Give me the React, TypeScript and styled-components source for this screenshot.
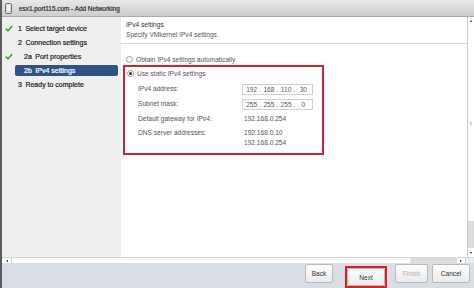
import React from "react";
import styled, { createGlobalStyle } from "styled-components";

const GlobalStyle = createGlobalStyle`
  html, body {
    margin: 0;
    padding: 0;
    background: #fff;
  }
  body {
    font-family: "Liberation Sans", Arial, sans-serif;
  }
`;

const Window = styled.div`
  width: 474px;
  height: 288px;
  box-sizing: border-box;
  border-left: 2px solid #5b5b5b;
  display: flex;
  flex-direction: column;
  overflow: hidden;
  background: #fff;
`;

const TitleBar = styled.div`
  height: 17px;
  flex: none;
  box-sizing: border-box;
  display: flex;
  align-items: center;
  padding-left: 3px;
  gap: 7px;
  background: linear-gradient(#e8e8e8, #cdcdcd);
  border-bottom: 1px solid #a9a9a9;
  font-size: 6.4px;
  color: #2e2e2e;
  -webkit-text-stroke: 0.2px #2e2e2e;
`;

const Middle = styled.div`
  height: 240px;
  flex: none;
  display: flex;
`;

const Nav = styled.nav`
  width: 119px;
  flex: none;
  background: #efefef;
  padding: 4px 0 0 3px;
  box-sizing: border-box;
`;

const NavItem = styled.div`
  height: 14px;
  display: flex;
  align-items: center;
`;

const CheckSlot = styled.span`
  width: 13px;
  flex: none;
  display: flex;
  align-items: center;
`;

const NavLabel = styled.span<{ $indent: number; $active?: boolean }>`
  display: flex;
  align-items: center;
  height: 11px;
  font-size: 7px;
  white-space: nowrap;
  -webkit-text-stroke: 0.2px ${(p) => (p.$active ? "#fff" : "#222")};
  margin-left: ${(p) => (p.$active ? p.$indent - 9 : p.$indent)}px;
  padding-left: ${(p) => (p.$active ? 9 : 0)}px;
  color: ${(p) => (p.$active ? "#fff" : "#222")};
  background: ${(p) => (p.$active ? "#2d5485" : "transparent")};
  border-radius: 2px;
  flex: ${(p) => (p.$active ? 1 : "none")};
  margin-right: 3px;
`;

const Num = styled.span`
  margin-right: 3.5px;
`;

const Content = styled.main`
  flex: 1;
  background: #fff;
  font-size: 6.6px;
  color: #555;
`;

const Header = styled.header`
  padding: 3px 0 3px 5px;
  border-bottom: 1px solid #dedede;
`;

const HeaderTitle = styled.div`
  line-height: 10px;
  color: #333;
`;

const HeaderSub = styled.div`
  line-height: 10px;
  color: #555;
`;

const Section = styled.section`
  padding: 10px 0 0 1px;
`;

const RadioRow = styled.label<{ $inset: number }>`
  display: flex;
  align-items: center;
  gap: 3px;
  height: 10px;
  margin-left: ${(p) => p.$inset}px;
  color: #555;
`;

const Radio = styled.span<{ $checked?: boolean }>`
  width: 7px;
  height: 7px;
  box-sizing: border-box;
  border-radius: 50%;
  border: 1px solid #9a9a9a;
  background: #fff;
  display: flex;
  align-items: center;
  justify-content: center;
  &::after {
    content: "";
    width: 3px;
    height: 3px;
    border-radius: 50%;
    background: ${(p) => (p.$checked ? "#333" : "transparent")};
  }
`;

const Highlight = styled.div`
  margin: 1px 0 0 1px;
  width: 201px;
  box-sizing: border-box;
  border: 2px solid #d6202e;
  padding: 1px 2px 5px 2px;
`;

const Fields = styled.div`
  margin-top: 6px;
  padding-left: 11px;
  display: grid;
  grid-template-columns: 104px auto;
  row-gap: 4px;
  align-items: start;
`;

const FieldLabel = styled.div<{ $h: number }>`
  height: ${(p) => p.$h}px;
  line-height: 10px;
  color: #555;
`;

const FieldValue = styled.div`
  line-height: 10px;
  padding-left: 2px;
  color: #555;
`;

const IpInput = styled.div`
  width: 71px;
  height: 11px;
  box-sizing: border-box;
  border: 1px solid #cfcfcf;
  background: #fff;
  display: grid;
  grid-template-columns: 1fr auto 1fr auto 1fr auto 1fr;
  align-items: center;
  text-align: center;
  padding: 0 1px;
  color: #5a5a5a;
  line-height: 9px;
`;

const VScroll = styled.div`
  width: 7px;
  flex: none;
  box-sizing: border-box;
  border-left: 1px solid #cacaca;
  display: flex;
  flex-direction: column;
  background: #fff;
`;

const ArrowCell = styled.div<{ $h: number }>`
  height: ${(p) => p.$h}px;
  flex: none;
  display: flex;
  align-items: center;
  justify-content: center;
`;

const Tri = styled.span<{ $dir: "up" | "down" | "left" | "right" }>`
  width: 0;
  height: 0;
  border: 1.5px solid transparent;
  ${(p) =>
    p.$dir === "up"
      ? "border-bottom: 2px solid #222; border-top-width: 0;"
      : p.$dir === "down"
      ? "border-top: 2px solid #222; border-bottom-width: 0;"
      : p.$dir === "left"
      ? "border-right: 2px solid #222; border-left-width: 0;"
      : "border-left: 2px solid #222; border-right-width: 0;"}
`;

const VThumb = styled.div`
  flex: 1;
  display: flex;
  align-items: center;
  justify-content: center;
  color: #999;
  font-size: 5px;
`;

const Track = styled.div<{ $size: number; $horizontal?: boolean }>`
  flex: none;
  background: #dcdcdc;
  ${(p) => (p.$horizontal ? `width: ${p.$size}px;` : `height: ${p.$size}px;`)}
`;

const HScroll = styled.div`
  height: 6px;
  flex: none;
  box-sizing: border-box;
  display: flex;
  border-top: 1px solid #d6d6d6;
  background: #fff;
`;

const HArrow = styled.div<{ $w: number }>`
  width: ${(p) => p.$w}px;
  flex: none;
  display: flex;
  align-items: center;
  justify-content: center;
  border-right: 1px solid #cfcfcf;
  box-sizing: border-box;
`;

const HThumb = styled.div`
  flex: 1;
`;

const Corner = styled.div`
  width: 8px;
  flex: none;
  background: #ececec;
`;

const Footer = styled.footer`
  height: 25px;
  flex: none;
  box-sizing: border-box;
  background: #d9dde4;
  display: flex;
  justify-content: flex-end;
  align-items: flex-start;
  padding: 1px 4px 0 0;
`;

const Button = styled.button<{ $w: number; $h?: number; $ml?: number; $disabled?: boolean }>`
  width: ${(p) => p.$w}px;
  height: ${(p) => p.$h ?? 19}px;
  margin-left: ${(p) => p.$ml ?? 0}px;
  box-sizing: border-box;
  padding: 0;
  border: 1px solid #b9b9b9;
  border-radius: 2px;
  background: linear-gradient(#fdfdfd, #ebebeb);
  font-family: "Liberation Sans", Arial, sans-serif;
  font-size: 6.6px;
  color: ${(p) => (p.$disabled ? "#b0b0b0" : "#333")};
`;

const RedFrame = styled.div<{ $ml: number }>`
  margin: 2px 0 0 ${(p) => p.$ml}px;
  border: 2px solid #d6202e;
  display: flex;
`;

const Check = () => (
  <svg width="8" height="7" viewBox="0 0 8 7">
    <polyline points="0.8,3.6 3,5.8 7.2,1" fill="none" stroke="#4f9a3d" strokeWidth="1.5" />
  </svg>
);

const DeviceIcon = () => (
  <svg width="7" height="11" viewBox="0 0 7 11">
    <rect x="0.5" y="0.5" width="6" height="10" rx="1.2" fill="#d8d8d8" stroke="#6e6e6e" />
    <rect x="1.8" y="1.8" width="3.4" height="6" fill="#f2f2f2" />
  </svg>
);

const steps = [
  { num: "1", text: "Select target device", indent: 0, done: true },
  { num: "2", text: "Connection settings", indent: 0 },
  { num: "2a", text: "Port properties", indent: 6, done: true },
  { num: "2b", text: "IPv4 settings", indent: 6, active: true },
  { num: "3", text: "Ready to complete", indent: 0 },
];

const Ip = ({ parts }: { parts: string[] }) => (
  <IpInput>
    {parts.map((p, i) => (
      <React.Fragment key={i}>
        {i > 0 && <span>.</span>}
        <span>{p}</span>
      </React.Fragment>
    ))}
  </IpInput>
);

export default function App() {
  return (
    <>
      <GlobalStyle />
      <Window>
        <TitleBar>
          <DeviceIcon />
          <span>esx1.port115.com - Add Networking</span>
        </TitleBar>
        <Middle>
          <Nav>
            {steps.map((s) => (
              <NavItem key={s.num}>
                <CheckSlot>{s.done && <Check />}</CheckSlot>
                <NavLabel $indent={s.indent} $active={s.active}>
                  <Num>{s.num}</Num>
                  {s.text}
                </NavLabel>
              </NavItem>
            ))}
          </Nav>
          <Content>
            <Header>
              <HeaderTitle>IPv4 settings</HeaderTitle>
              <HeaderSub>Specify VMkernel IPv4 settings.</HeaderSub>
            </Header>
            <Section>
              <RadioRow $inset={4}>
                <Radio />
                Obtain IPv4 settings automatically
              </RadioRow>
              <Highlight>
                <RadioRow $inset={0}>
                  <Radio $checked />
                  Use static IPv4 settings
                </RadioRow>
                <Fields>
                  <FieldLabel $h={11}>IPv4 address:</FieldLabel>
                  <Ip parts={["192", "168", "110", "30"]} />
                  <FieldLabel $h={11}>Subnet mask:</FieldLabel>
                  <Ip parts={["255", "255", "255", "0"]} />
                  <FieldLabel $h={10}>Default gateway for IPv4:</FieldLabel>
                  <FieldValue>192.168.0.254</FieldValue>
                  <FieldLabel $h={20}>DNS server addresses:</FieldLabel>
                  <FieldValue>
                    192.168.0.10
                    <br />
                    192.168.0.254
                  </FieldValue>
                </Fields>
              </Highlight>
            </Section>
          </Content>
          <VScroll>
            <ArrowCell $h={7}>
              <Tri $dir="up" />
            </ArrowCell>
            <VThumb>≡</VThumb>
            <Track $size={27} />
            <ArrowCell $h={9}>
              <Tri $dir="down" />
            </ArrowCell>
          </VScroll>
        </Middle>
        <HScroll>
          <HArrow $w={10}>
            <Tri $dir="left" />
          </HArrow>
          <HThumb />
          <Track $size={47} $horizontal />
          <HArrow $w={9}>
            <Tri $dir="right" />
          </HArrow>
          <Corner />
        </HScroll>
        <Footer>
          <Button $w={28}>Back</Button>
          <RedFrame $ml={12}>
            <Button $w={38} $h={18}>
              Next
            </Button>
          </RedFrame>
          <Button $w={33} $ml={8} $disabled>
            Finish
          </Button>
          <Button $w={38} $ml={4}>
            Cancel
          </Button>
        </Footer>
      </Window>
    </>
  );
}
